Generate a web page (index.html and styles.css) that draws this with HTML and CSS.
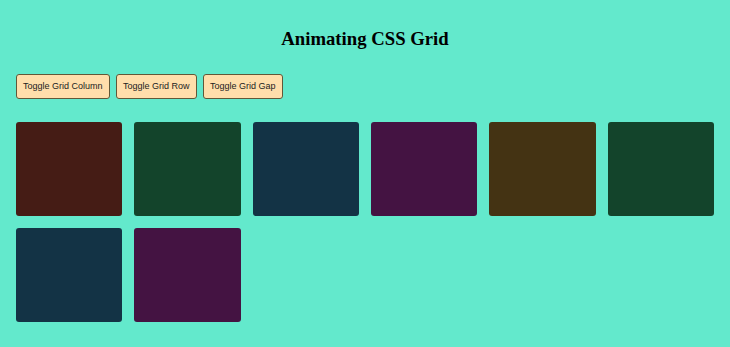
FILE: index.html
```html
<!DOCTYPE html>
<html lang="en">
<head>
    <meta charset="UTF-8">
    <meta name="viewport" content="width=device-width, initial-scale=1.0">
    <title>Animating CSS Grid</title>
    <link rel="stylesheet" href="styles.css">
</head>
<body>

    <h1>Animating CSS Grid</h1>

    <!-- botones para cambiar la grilla -->
    <div class="controls">
        <button class="toggle">Toggle Grid Column</button>
        <button class="toggle">Toggle Grid Row</button>
        <button class="toggle">Toggle Grid Gap</button>
    </div>

    <div class="grid">
        <div class="item brown"></div>
        <div class="item green"></div>
        <div class="item blue"></div>
        <div class="item purple"></div>
        <div class="item olive"></div>
        <div class="item green"></div>
        <div class="item blue"></div>
        <div class="item purple"></div>
    </div>

</body>
</html>
```

FILE: styles.css
```css
body {
    background-color: #63e9cc;
    margin: 0;
    padding: 16px;
    font-family: 'Liberation Serif', 'Times New Roman', serif;
}

h1 {
    text-align: center;
    font-size: 18.72px;
    margin: 12px 0 24px;
    color: #000000;
}

.controls {
    display: flex;
    gap: 6.5px;
    margin-bottom: 23px;
}

.toggle {
    font-family: 'Liberation Sans', Arial, sans-serif;
    font-size: 9px;
    line-height: 11px;
    color: #222222;
    background-color: #ffdeab;
    border: 1px solid #615838;
    border-radius: 3px;
    padding: 6px 6px;
    cursor: pointer;
}

.grid {
    display: grid;
    grid-template-columns: repeat(6, 1fr);
    grid-auto-rows: 94px;
    gap: 12px;
}

.item {
    border-radius: 3px;
}

.brown { background-color: #451c15; }
.green { background-color: #13442b; }
.blue { background-color: #133345; }
.purple { background-color: #441342; }
.olive { background-color: #443313; }
```
